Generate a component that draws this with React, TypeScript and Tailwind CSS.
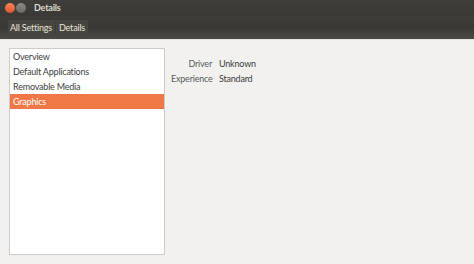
export default function App() {
  const items = ['Overview', 'Default Applications', 'Removable Media', 'Graphics']
  const selected = 'Graphics'

  return (
    <div className="w-[474px] h-[264px] flex flex-col bg-[#f2f1f0] font-['Lato',sans-serif] text-[9px] tracking-[-0.2px] text-[#3c3c3c] overflow-hidden">
      {/* Title bar */}
      <div className="h-[16px] flex items-center bg-gradient-to-b from-[#3f3e3a] to-[#3a3935] px-[5px] gap-[1px]">
        <div className="w-[10px] h-[10px] rounded-full bg-gradient-to-b from-[#f5845a] to-[#e0552b]" />
        <div className="w-[10px] h-[10px] rounded-full bg-gradient-to-b from-[#8a8986] to-[#6c6b68]" />
        <span className="ml-[7px] font-bold text-[#dfdbd2]">Details</span>
      </div>

      {/* Toolbar */}
      <div className="h-[23px] flex items-center px-[8px] bg-gradient-to-b from-[#3f3e3a] via-[#393834] to-[#4a4944]">
        <div className="flex items-stretch h-[16px] text-[#e6e3dc] bg-[#46453f]">
          <span className="pl-[2px] pr-[3px] flex items-center">All Settings</span>
          <span className="w-px my-[2px] bg-[#3c3b37]" />
          <span className="pl-[3px] pr-[3px] flex items-center">Details</span>
        </div>
      </div>

      {/* Content */}
      <div className="flex-1 flex pt-[8px] pl-[9px] pb-[9px] border-t border-[#e6e4e0]">
        <div className="w-[156px] bg-white border border-[#cfccc7] flex flex-col">
          {items.map((item) => (
            <div
              key={item}
              className={
                item === selected
                  ? 'h-[15px] flex items-center px-[3px] bg-[#f07746] text-white'
                  : 'h-[15px] flex items-center px-[3px]'
              }
            >
              {item}
            </div>
          ))}
        </div>

        <div className="pt-[9px] pl-[6px]">
          <div className="grid grid-cols-[auto_auto] gap-x-[7px] gap-y-[2px] leading-[13px]">
            <span className="text-right w-[41px] text-[#5a5a5a]">Driver</span>
            <span>Unknown</span>
            <span className="text-right w-[41px] text-[#5a5a5a]">Experience</span>
            <span>Standard</span>
          </div>
        </div>
      </div>
    </div>
  )
}
